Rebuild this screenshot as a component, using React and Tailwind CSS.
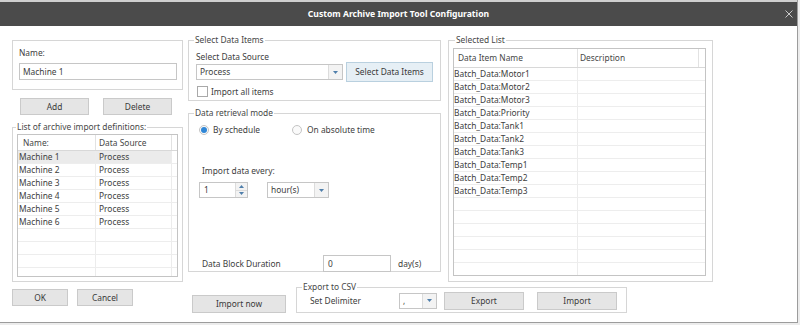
import React from "react";

const Arrow = ({ up }) => (
  <svg width="5" height="3" viewBox="0 0 5 3">
    <path d={up ? "M0 3H5L2.5 0z" : "M0 0H5L2.5 3z"} fill="#4f7fab" />
  </svg>
);

function Button({ className, children }) {
  return (
    <div
      className={`flex items-center justify-center border border-[#cacaca] bg-[#e5e5e5] text-[#3a3a3a] ${className}`}
    >
      {children}
    </div>
  );
}

function Group({ label, labelLeft, className, children }) {
  return (
    <div className={`relative border border-[#d6d6d6] ${className}`}>
      {label && (
        <span
          className={`absolute top-[-6px] bg-white px-[1px] leading-[10px] text-[#474747] ${labelLeft}`}
        >
          {label}
        </span>
      )}
      {children}
    </div>
  );
}

function Combo({ className, value }) {
  return (
    <div className={`flex h-[16px] border border-[#c6c6c6] bg-white ${className}`}>
      <div className="flex flex-1 items-center pl-[3px]">{value}</div>
      <div className="flex w-[14px] items-center justify-center border-l border-[#dcdcdc] bg-[#f3f3f3]">
        <Arrow />
      </div>
    </div>
  );
}

function Radio({ checked }) {
  return (
    <div className="flex h-[10px] w-[10px] items-center justify-center rounded-full border border-[#c4c4c4] bg-[#fafafa]">
      {checked && <div className="h-[6px] w-[6px] rounded-full bg-[#2f86d6]" />}
    </div>
  );
}

const definitions = [
  "Machine 1",
  "Machine 2",
  "Machine 3",
  "Machine 4",
  "Machine 5",
  "Machine 6",
];

const selectedItems = [
  "Batch_Data:Motor1",
  "Batch_Data:Motor2",
  "Batch_Data:Motor3",
  "Batch_Data:Priority",
  "Batch_Data:Tank1",
  "Batch_Data:Tank2",
  "Batch_Data:Tank3",
  "Batch_Data:Temp1",
  "Batch_Data:Temp2",
  "Batch_Data:Temp3",
];

function DefinitionsTable() {
  const rows = [...definitions, "", "", "", ""];
  return (
    <div className="flex h-[143px] w-[161px] flex-col overflow-hidden border border-[#c4c4c4]">
      <div className="flex h-[16px] shrink-0 border-b border-[#d8d8d8] text-[#474747]">
        <div className="flex w-[78px] items-center border-r border-[#e2e2e2] pl-[5px]">Name:</div>
        <div className="flex w-[76px] items-center border-r border-[#e2e2e2] pl-[3px]">Data Source</div>
        <div className="flex-1" />
      </div>
      {rows.map((name, i) => (
        <div key={i} className="flex h-[13px] shrink-0 border-b border-[#ededed]">
          <div
            className={`flex w-[78px] items-center border-r border-[#ececec] pl-[1px] ${
              i === 0 ? "bg-[#ebebeb]" : ""
            }`}
          >
            {name}
          </div>
          <div
            className={`flex w-[76px] items-center border-r border-[#ececec] pl-[3px] ${
              i === 0 ? "bg-[#ebebeb]" : ""
            }`}
          >
            {name ? "Process" : ""}
          </div>
          <div className="flex-1" />
        </div>
      ))}
    </div>
  );
}

function SelectedTable() {
  const rows = [...selectedItems, "", "", "", "", "", "", ""];
  return (
    <div className="flex h-[228px] w-[253px] flex-col overflow-hidden border border-[#c4c4c4]">
      <div className="flex h-[19px] shrink-0 border-b border-[#d8d8d8] text-[#474747]">
        <div className="flex w-[124px] items-center border-r border-[#e2e2e2] pl-[4px]">Data Item Name</div>
        <div className="flex w-[121px] items-center border-r border-[#e2e2e2] pl-[2px]">Description</div>
        <div className="flex-1" />
      </div>
      {rows.map((name, i) => (
        <div key={i} className="flex h-[13px] shrink-0 border-b border-[#ededed]">
          <div className="flex w-[124px] items-center border-r border-[#ececec] pl-[0px]">{name}</div>
          <div className="w-[121px]" />
        </div>
      ))}
    </div>
  );
}

export default function App() {
  return (
    <div className="h-[325px] w-[800px] overflow-hidden bg-[#ececec] text-[8.4px] leading-[10px] text-[#404040] [font-family:'Noto_Sans',sans-serif]">
      <div className="flex h-[323px] w-[798px] flex-col border-b border-r border-[#9c9c9c] bg-white">
        <div className="h-[2px] bg-[#cfcfcf]" />
        {/* Title bar */}
        <div className="flex h-[24px] items-center bg-[#4b4b4b]">
          <div className="w-[40px]" />
          <div className="flex-1 text-center text-[8.6px] font-bold text-white">
            Custom Archive Import Tool Configuration
          </div>
          <div className="flex w-[40px] justify-end pr-[4px]">
            <svg width="8" height="8" viewBox="0 0 8 8">
              <path d="M0.5 0.5L7.5 7.5M7.5 0.5L0.5 7.5" stroke="#c9c9c9" strokeWidth="1" />
            </svg>
          </div>
        </div>

        {/* Body */}
        <div className="flex pl-[12px] pt-[14px]">
          {/* Left column */}
          <div className="flex w-[171px] flex-col">
            <div className="flex h-[50px] flex-col border border-[#d6d6d6] px-[6px] pt-[7px]">
              <div>Name:</div>
              <div className="mt-[5px] flex h-[17px] w-[158px] items-center border border-[#c6c6c6] pl-[3px]">
                Machine 1
              </div>
            </div>
            <div className="mt-[8px] flex">
              <Button className="ml-[8px] h-[17px] w-[69px]">Add</Button>
              <Button className="ml-[14px] h-[17px] w-[69px]">Delete</Button>
            </div>
            <Group
              label="List of archive import definitions:"
              labelLeft="left-[3px]"
              className="mt-[12px] h-[155px] px-[4px] pt-[6px]"
            >
              <DefinitionsTable />
            </Group>
            <div className="mt-[7px] flex">
              <Button className="h-[17px] w-[56px]">OK</Button>
              <Button className="ml-[9px] h-[17px] w-[56px]">Cancel</Button>
            </div>
          </div>

          {/* Right part */}
          <div className="ml-[5px] flex flex-col">
            <div className="flex">
              {/* Middle column */}
              <div className="flex w-[253px] flex-col">
                <Group
                  label="Select Data Items"
                  labelLeft="left-[5px]"
                  className="flex h-[61px] flex-col pl-[7px] pt-[11px]"
                >
                  <div>Select Data Source</div>
                  <div className="flex items-center">
                    <Combo className="w-[147px]" value="Process" />
                    <div className="ml-[3px] flex h-[20px] w-[87px] items-center justify-center border border-[#b9d0df] bg-[#e6eff5] text-[#3a3a3a]">
                      Select Data Items
                    </div>
                  </div>
                  <div className="mt-[4px] flex items-center">
                    <div className="ml-[1px] h-[11px] w-[11px] border border-[#a9a9a9] bg-white" />
                    <span className="ml-[3px]">Import all items</span>
                  </div>
                </Group>

                <Group
                  label="Data retrieval mode"
                  labelLeft="left-[5px]"
                  className="mt-[12px] flex h-[159px] flex-col pl-[10px] pt-[11px]"
                >
                  <div className="flex h-[10px] items-center">
                    <Radio checked />
                    <span className="ml-[4px] w-[79px]">By schedule</span>
                    <Radio />
                    <span className="ml-[5px]">On absolute time</span>
                  </div>
                  <div className="mt-[31px] pl-[3px]">Import data every:</div>
                  <div className="mt-[6px] flex">
                    <div className="flex h-[16px] w-[49px] border border-[#c6c6c6]">
                      <div className="flex flex-1 items-center pl-[4px]">1</div>
                      <div className="flex w-[12px] flex-col border-l border-[#dcdcdc] bg-[#f3f3f3]">
                        <div className="flex flex-1 items-center justify-center border-b border-[#dcdcdc]">
                          <Arrow up />
                        </div>
                        <div className="flex flex-1 items-center justify-center">
                          <Arrow />
                        </div>
                      </div>
                    </div>
                    <Combo className="ml-[19px] w-[62px]" value="hour(s)" />
                  </div>
                  <div className="mt-[57px] flex items-center">
                    <span className="w-[124px] pl-[3px]">Data Block Duration</span>
                    <div className="flex h-[17px] w-[68px] items-center border border-[#c6c6c6] pl-[4px]">0</div>
                    <span className="ml-[7px]">day(s)</span>
                  </div>
                </Group>
              </div>

              {/* Right column */}
              <Group
                label="Selected List"
                labelLeft="left-[6px]"
                className="ml-[7px] h-[242px] w-[265px] px-[4px] pt-[7px]"
              >
                <SelectedTable />
              </Group>
            </div>

            {/* Bottom row */}
            <div className="mt-[5px] flex items-start">
              <Button className="ml-[4px] mt-[8px] h-[18px] w-[94px]">Import now</Button>
              <Group
                label="Export to CSV"
                labelLeft="left-[5px]"
                className="ml-[10px] flex h-[26px] w-[331px] items-center pt-[1px]"
              >
                <span className="ml-[13px] w-[89px]">Set Delimiter</span>
                <Combo className="w-[38px]" value="," />
                <Button className="ml-[7px] h-[18px] w-[80px]">Export</Button>
                <Button className="ml-[13px] h-[18px] w-[80px]">Import</Button>
              </Group>
            </div>
          </div>
        </div>
      </div>
    </div>
  );
}
